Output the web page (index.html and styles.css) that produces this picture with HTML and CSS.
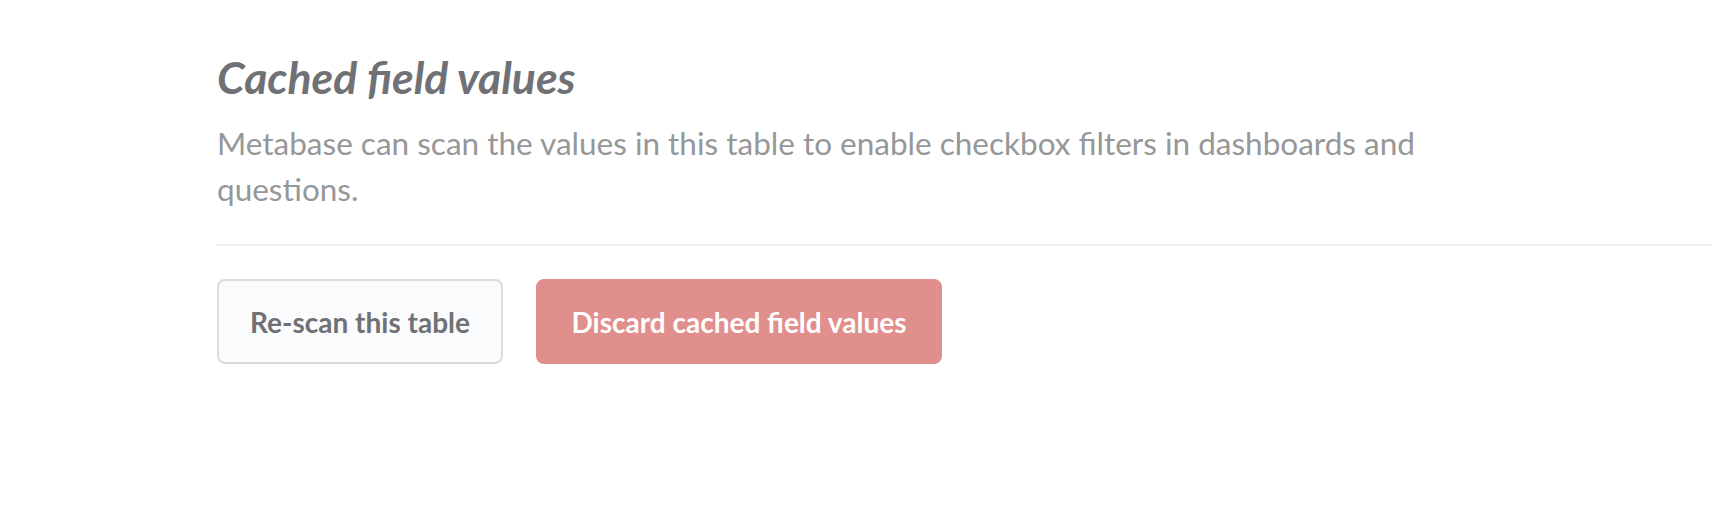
FILE: index.html
```html
<!DOCTYPE html>
<html>
<head>
<meta charset="utf-8">
<link rel="stylesheet" href="styles.css">
</head>
<body>
<div class="page">
  <section class="section">
    <h2 class="title">Cached field values</h2>
    <p class="desc">Metabase can scan the values in this table to enable checkbox filters in dashboards and questions.</p>
    <div class="divider"></div>
    <div class="actions">
      <button class="btn btn-default">Re-scan this table</button>
      <button class="btn btn-danger">Discard cached field values</button>
    </div>
  </section>
</div>
</body>
</html>
```
FILE: styles.css
```css
html, body {
  margin: 0;
  padding: 0;
  background: #ffffff;
}
body {
  font-family: Lato, "Open Sans", "Liberation Sans", sans-serif;
  width: 1712px;
  height: 512px;
  overflow: hidden;
}
.page {
  padding: 51px 0 0 217px;
}
.section {
  display: flex;
  flex-direction: column;
}
.title {
  margin: 0;
  font-size: 44.5px;
  line-height: 52px;
  font-weight: 700;
  font-style: italic;
  color: #6f7175;
}
.desc {
  margin: 17px 0 0 0;
  max-width: 1260px;
  font-size: 31.5px;
  line-height: 46px;
  font-weight: 400;
  color: #959799;
}
.divider {
  margin-top: 32px;
  height: 2px;
  background: #eeeeee;
}
.actions {
  margin-top: 33px;
  display: flex;
  gap: 33px;
}
.btn {
  box-sizing: border-box;
  height: 85px;
  border-radius: 8px;
  font-family: Lato, "Open Sans", "Liberation Sans", sans-serif;
  font-size: 28px;
  font-weight: 700;
  padding: 0;
  display: flex;
  align-items: center;
  justify-content: center;
}
.btn-default {
  width: 286px;
  background: #f9fbfc;
  border: 2px solid #dcdcdc;
  color: #6f7175;
}
.btn-danger {
  width: 406px;
  background: #e08f8c;
  border: 2px solid #e08f8c;
  color: #ffffff;
}
```
